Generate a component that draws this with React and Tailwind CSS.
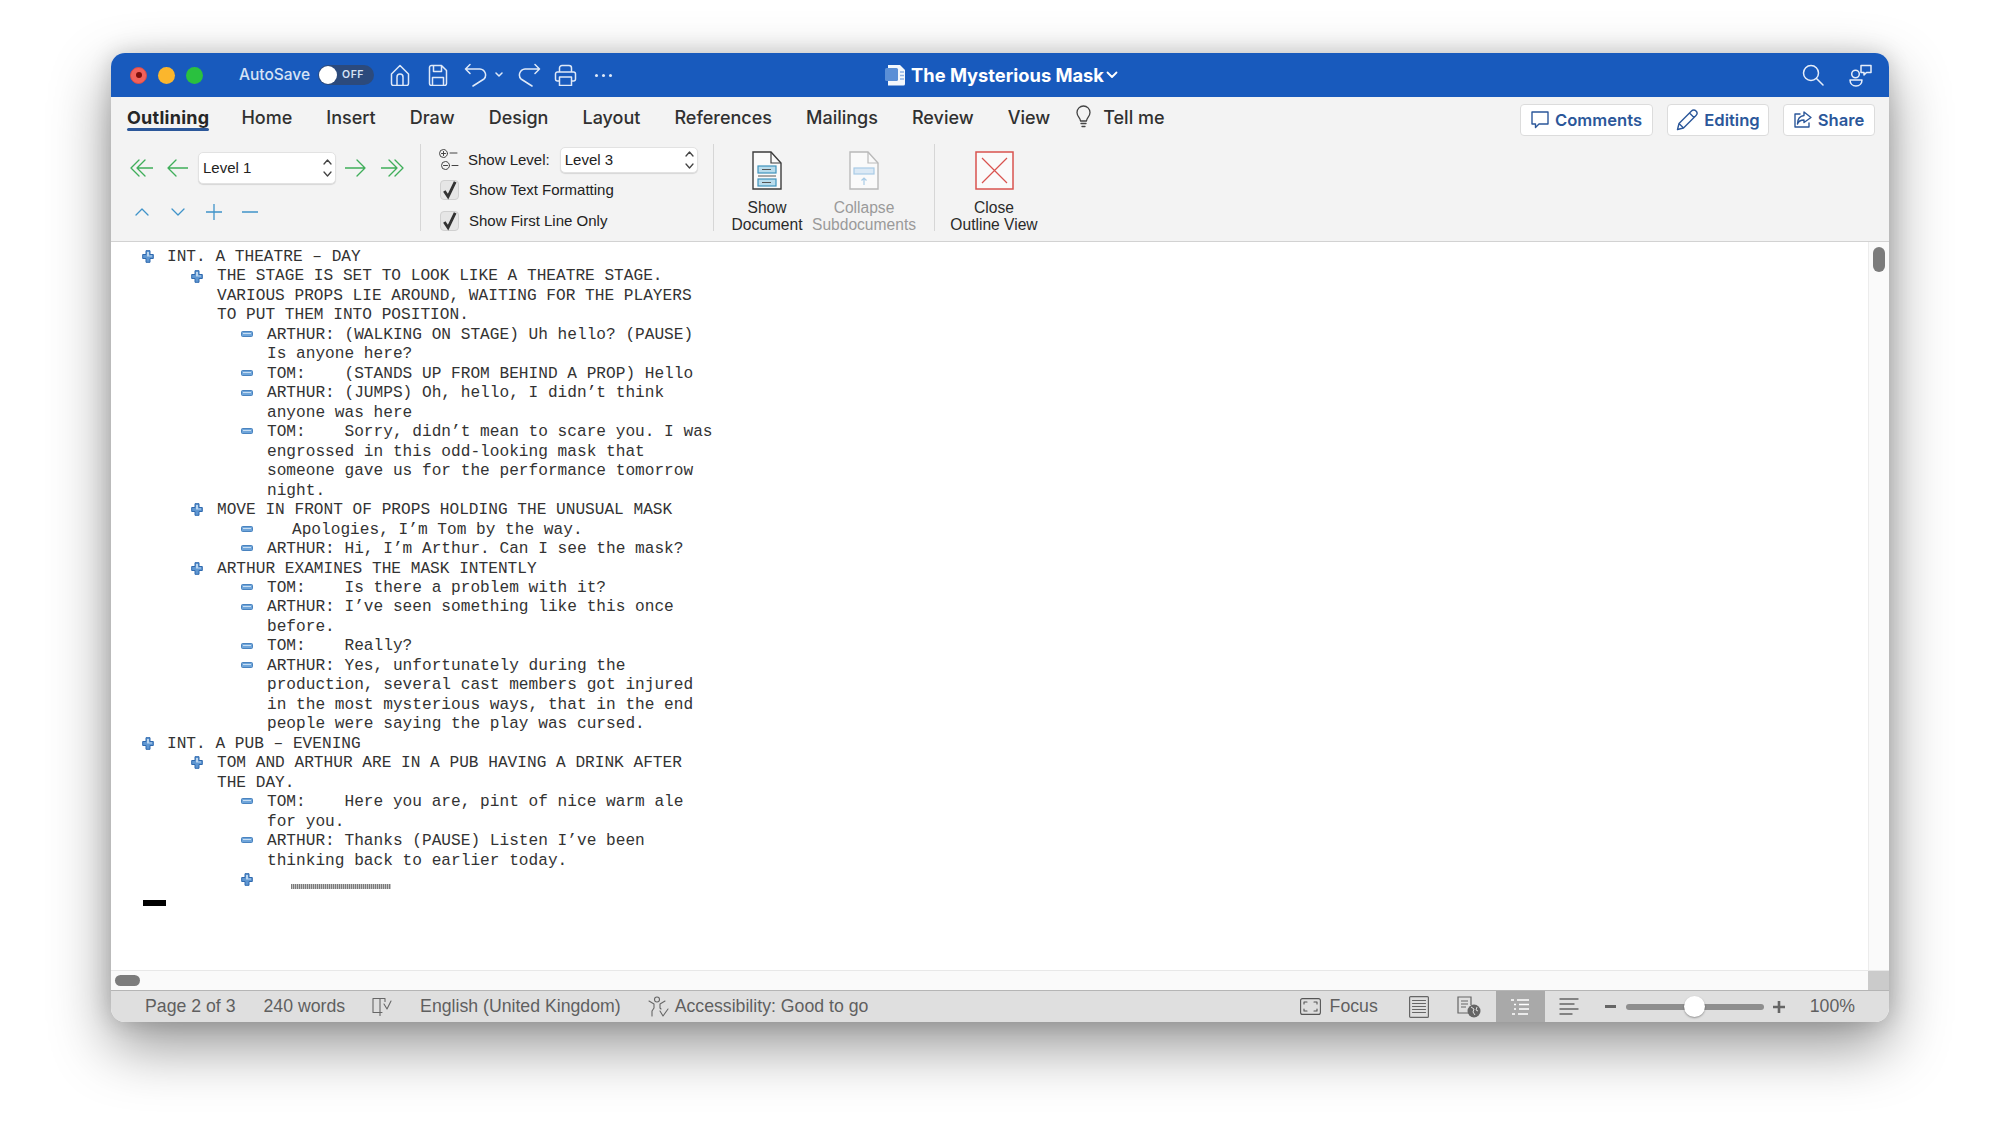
import React from 'react';

const ui = { fontFamily: 'Inter, "Liberation Sans", sans-serif' };
const arial = { fontFamily: '"Liberation Sans", Arial, sans-serif' };

const doc = [
  [1, 'plus', 'INT. A THEATRE – DAY'],
  [2, 'plus', 'THE STAGE IS SET TO LOOK LIKE A THEATRE STAGE.'],
  [2, null, 'VARIOUS PROPS LIE AROUND, WAITING FOR THE PLAYERS'],
  [2, null, 'TO PUT THEM INTO POSITION.'],
  [3, 'minus', 'ARTHUR: (WALKING ON STAGE) Uh hello? (PAUSE)'],
  [3, null, 'Is anyone here?'],
  [3, 'minus', 'TOM:    (STANDS UP FROM BEHIND A PROP) Hello'],
  [3, 'minus', 'ARTHUR: (JUMPS) Oh, hello, I didn’t think'],
  [3, null, 'anyone was here'],
  [3, 'minus', 'TOM:    Sorry, didn’t mean to scare you. I was'],
  [3, null, 'engrossed in this odd-looking mask that'],
  [3, null, 'someone gave us for the performance tomorrow'],
  [3, null, 'night.'],
  [2, 'plus', 'MOVE IN FRONT OF PROPS HOLDING THE UNUSUAL MASK'],
  [3, 'minus', 'Apologies, I’m Tom by the way.', 'pl-[25px]'],
  [3, 'minus', 'ARTHUR: Hi, I’m Arthur. Can I see the mask?'],
  [2, 'plus', 'ARTHUR EXAMINES THE MASK INTENTLY'],
  [3, 'minus', 'TOM:    Is there a problem with it?'],
  [3, 'minus', 'ARTHUR: I’ve seen something like this once'],
  [3, null, 'before.'],
  [3, 'minus', 'TOM:    Really?'],
  [3, 'minus', 'ARTHUR: Yes, unfortunately during the'],
  [3, null, 'production, several cast members got injured'],
  [3, null, 'in the most mysterious ways, that in the end'],
  [3, null, 'people were saying the play was cursed.'],
  [1, 'plus', 'INT. A PUB – EVENING'],
  [2, 'plus', 'TOM AND ARTHUR ARE IN A PUB HAVING A DRINK AFTER'],
  [2, null, 'THE DAY.'],
  [3, 'minus', 'TOM:    Here you are, pint of nice warm ale'],
  [3, null, 'for you.'],
  [3, 'minus', 'ARTHUR: Thanks (PAUSE) Listen I’ve been'],
  [3, null, 'thinking back to earlier today.'],
];

const indent = { 1: 'pl-[31px]', 2: 'pl-[80px]', 3: 'pl-[130px]' };
const textGap = { 1: 'w-[25px]', 2: 'w-[26px]', 3: 'w-[26px]' };

const PlusMark = () => (
  <svg width="12" height="13" viewBox="0 0 12 13" className="mt-[1px]">
    <path d="M4 .7h4v3.8h3.3v4H8v3.8H4V8.5H.7v-4H4z" fill="#5f97d2" stroke="#2f69ae" strokeWidth="1" />
    <path d="M5 2h2v3.6h3v1H5z" fill="#bcd6ef" />
  </svg>
);

const MinusMark = () => (
  <svg width="12" height="6" viewBox="0 0 12 6">
    <rect x=".5" y=".5" width="11" height="5" rx="1" fill="#6fa5da" stroke="#4a83bf" />
    <rect x="2" y="2" width="8" height="1" fill="#c8def3" />
  </svg>
);

const DocRow = ({ level, mark, text, pad }) => (
  <div className={`flex h-[19.48px] items-center ${indent[level]}`}>
    <div className={`${textGap[level]} shrink-0 flex items-center`}>
      {mark === 'plus' && <PlusMark />}
      {mark === 'minus' && <MinusMark />}
    </div>
    <span className={`whitespace-pre pt-[3px] ${pad || ''}`}>{text}</span>
  </div>
);

const Stroke = ({ w, h, vb, color = '#fff', sw = 1.5, children, className = '' }) => (
  <svg width={w} height={h} viewBox={vb || `0 0 ${w} ${h}`} fill="none" stroke={color} strokeWidth={sw} strokeLinecap="round" strokeLinejoin="round" className={`shrink-0 ${className}`}>
    {children}
  </svg>
);

const Stepper = () => (
  <Stroke w={9} h={22} color="#444" sw={1.3}>
    <path d="M1 7l3.500-4L8 7M1 15l3.500 4L8 15" />
  </Stroke>
);

const Check = () => (
  <div className="w-[19px] h-[20px] rounded-[4px] bg-[#e6e6e6] border border-[#d0d0d0] flex items-center justify-center shrink-0">
    <svg width="18" height="20" viewBox="0 0 18 20" fill="none" stroke="#333" strokeWidth="3">
      <path d="M3.500 11l4 6L15 1.500" />
    </svg>
  </div>
);

const PageIcon = ({ dim }) => {
  const edge = dim ? '#b9b9b9' : '#3c3c3c';
  return (
    <svg width="30" height="39" viewBox="0 0 30 39" fill="none">
      <path d="M1 1h18l10 11v26H1z" fill="#fafafa" stroke={edge} strokeWidth="1.4" />
      <path d="M19 1v11h10" stroke={edge} strokeWidth="1.2" />
      {dim ? (
        <>
          <rect x="5" y="17" width="20" height="6" fill="#dbe9f5" stroke="#a8cbe6" strokeWidth="1.2" />
          <path d="M15 34v-7M12.500 29.500L15 27l2.500 2.500" stroke="#a8cbe6" strokeWidth="1.2" />
        </>
      ) : (
        <>
          <rect x="6" y="15" width="18" height="7" fill="#b9dcec" stroke="#3f93bd" strokeWidth="1.2" />
          <rect x="6" y="28" width="18" height="7" fill="#b9dcec" stroke="#3f93bd" strokeWidth="1.2" />
          <path d="M6 25h18" stroke="#555" strokeWidth="1" />
          <path d="M10 18.500h9M10 31.500h9" stroke="#555" strokeWidth="1" />
        </>
      )}
    </svg>
  );
};

const RibbonButton = ({ lines, dim, w, children }) => (
  <div className={`${w} flex flex-col items-center pt-[15px]`}>
    <div className="h-[39px] flex items-center justify-center">{children}</div>
    <div className={`mt-[9px] text-center text-[15.6px] leading-[17px] whitespace-nowrap ${dim ? 'text-[#9a9a9a]' : 'text-[#2a2a2a]'}`} style={arial}>
      {lines.map((l) => <div key={l}>{l}</div>)}
    </div>
  </div>
);

const Select = ({ label, w, h, className }) => (
  <div className={`${w} ${h} ${className} bg-white rounded-[5px] border border-[#e2e2e2] shadow-[0_1px_1px_rgba(0,0,0,0.12)] flex items-center justify-between pl-[4px] pr-[3px] text-[15px] text-[#222]`} style={arial}>
    <span className="pt-[1px]">{label}</span>
    <Stepper />
  </div>
);

const ActionButton = ({ w, icon, children }) => (
  <div className={`${w} h-[32px] bg-white border border-[#dcdcdc] rounded-[4px] flex items-center justify-center gap-[6px] text-[16.6px] font-semibold text-[#2b579a]`}>
    {icon}
    <span className="pt-[1px]">{children}</span>
  </div>
);

const tabs = ['Home', 'Insert', 'Draw', 'Design', 'Layout', 'References', 'Mailings', 'Review', 'View'];

export default function App() {
  return (
    <div className="w-[2000px] h-[1125px] bg-white overflow-hidden pt-[53px]" style={ui}>
      <div className="w-[1778px] h-[969px] mx-auto rounded-[14px] overflow-hidden flex flex-col bg-white shadow-[0_24px_60px_rgba(0,0,0,0.42),0_0_22px_rgba(0,0,0,0.16)]">

        {/* title bar */}
        <div className="h-[44px] bg-[#185abd] flex items-center shrink-0 text-white">
          <div className="flex-1 flex items-center pl-[19px]">
            <div className="w-[17px] h-[17px] rounded-full bg-[#f2615a] border border-[#d94d46] flex items-center justify-center">
              <div className="w-[6px] h-[6px] rounded-full bg-[#7d0f0a]" />
            </div>
            <div className="w-[17px] h-[17px] rounded-full bg-[#fbb62d] ml-[11px]" />
            <div className="w-[17px] h-[17px] rounded-full bg-[#2ac13f] ml-[11px]" />
            <span className="ml-[36px] text-[15.5px] font-medium text-[#d5e2f5]">AutoSave</span>
            <div className="ml-[8px] w-[56px] h-[20px] rounded-full bg-[#2c4a7c] flex items-center pl-[1px]">
              <div className="w-[18px] h-[18px] rounded-full bg-white" />
              <span className="ml-[5px] text-[10.5px] font-semibold tracking-[0.5px] text-[#d5e2f5]">OFF</span>
            </div>
            <Stroke w={20} h={22} className="ml-[16px]" color="#dfe9f8">
              <path d="M1.500 10L10 1.500 18.500 10v9.500a2 2 0 0 1-2 2h-13a2 2 0 0 1-2-2zM7 21.500V13a3 3 0 0 1 6 0v8.500" />
            </Stroke>
            <Stroke w={20} h={22} className="ml-[18px]" color="#dfe9f8">
              <path d="M1.500 3.500a2 2 0 0 1 2-2h10l5 5v13a2 2 0 0 1-2 2h-13a2 2 0 0 1-2-2zM5.500 1.500v6h8v-6M4.500 21.500v-8h11v8" />
            </Stroke>
            <Stroke w={24} h={24} className="ml-[16px]" color="#dfe9f8">
              <path d="M6 1.500L1.500 6 6 10.500M1.500 6H16a6 6 0 0 1 4 10L9 23" />
            </Stroke>
            <Stroke w={8} h={6} className="ml-[7px]" color="#dfe9f8">
              <path d="M1 1l3 3 3-3" />
            </Stroke>
            <Stroke w={23} h={24} className="ml-[15px]" color="#dfe9f8">
              <path d="M17 1.500L21.500 6 17 10.500M21.500 6H7a6 6 0 0 0-4 10l11 7" />
            </Stroke>
            <Stroke w={23} h={22} className="ml-[13px]" color="#dfe9f8">
              <path d="M5.500 8V4a2.500 2.500 0 0 1 2.500-2.500h7A2.500 2.500 0 0 1 17.500 4v4M5.500 17h-2a2 2 0 0 1-2-2v-5a2 2 0 0 1 2-2h16a2 2 0 0 1 2 2v5a2 2 0 0 1-2 2h-2M5.500 13h12v8.500h-12z" />
            </Stroke>
            <div className="ml-[18px] flex gap-[4px]">
              <div className="w-[3px] h-[3px] rounded-full bg-[#dfe9f8]" />
              <div className="w-[3px] h-[3px] rounded-full bg-[#dfe9f8]" />
              <div className="w-[3px] h-[3px] rounded-full bg-[#dfe9f8]" />
            </div>
          </div>
          <div className="flex items-center">
            <svg width="22" height="24" viewBox="0 0 22 24" className="mr-[4px]">
              <path d="M3 2h12l5 5v14a1.500 1.500 0 0 1-1.500 1.500H3z" fill="#f3f7fc" />
              <rect x="0" y="5" width="13" height="13" rx="1.500" fill="#5b8fd6" />
              <path d="M15 9h4M15 12.500h4M15 16h4" stroke="#8fb2e3" strokeWidth="1.500" />
            </svg>
            <span className="text-[18.300px] font-bold pt-[1px]">The Mysterious Mask</span>
            <Stroke w={12} h={8} className="ml-[2px]" sw={1.8}>
              <path d="M1.500 1.500L6 6l4.500-4.500" />
            </Stroke>
          </div>
          <div className="flex-1 flex items-center justify-end pr-[16px]">
            <Stroke w={22} h={22} color="#e6eefa">
              <circle cx="9" cy="9" r="7.500" />
              <path d="M14.500 14.500l6.500 6.500" />
            </Stroke>
            <Stroke w={24} h={23} className="ml-[25px]" color="#e6eefa">
              <circle cx="6.500" cy="10" r="3.800" />
              <path d="M1 16h12c0 3.500-2.500 6-6 6s-6-2.500-6-6z" />
              <path d="M12 1.500h10v7h-4.500L15 11V8.500h-3z" />
            </Stroke>
          </div>
        </div>

        {/* tabs */}
        <div className="h-[39px] bg-[#f3f3f3] flex items-center pl-[16px] pr-[14px] shrink-0 text-[18px] text-[#303030]">
          <div className="relative font-bold text-[#262626] pt-[2px] tracking-[0.25px]">
            Outlining
            <div className="absolute left-0 right-0 top-[26px] h-[3px] rounded-full bg-[#2b579a]" />
          </div>
          <div className="ml-[32px] flex items-center gap-[34px] font-medium pt-[2px]">
            {tabs.map((t) => <span key={t}>{t}</span>)}
          </div>
          <Stroke w={15} h={23} className="ml-[26px]" color="#444" sw={1.3}>
            <path d="M4.500 16c0-3-3.500-4.500-3.500-8.500a6.500 6.500 0 0 1 13 0C14 11.500 10.500 13 10.500 16zM5 18.500h5M6 21.500h3" />
          </Stroke>
          <span className="ml-[12px] font-medium pt-[2px]">Tell me</span>
          <div className="ml-auto flex gap-[14px] pt-[6px]">
            <ActionButton w="w-[133px]" icon={
              <Stroke w={18} h={18} color="#2b579a" sw={1.4}><path d="M1 1h16v12H8l-3.500 3.500V13H1z" /></Stroke>
            }>Comments</ActionButton>
            <ActionButton w="w-[102px]" icon={
              <Stroke w={22} h={22} color="#2b579a" sw={1.4}><path d="M1.500 20.500l1.500-6L15.500 2a2.100 2.100 0 0 1 4.500 4.500L7.500 19zM3 14.500L7.500 19M13.500 4l4.500 4.500" /></Stroke>
            }>Editing</ActionButton>
            <ActionButton w="w-[92px]" icon={
              <Stroke w={18} h={18} color="#2b579a" sw={1.4}><path d="M6 3H1v13h14v-4M10 1l7 5.500-7 5V9c-3.500 0-5.500 1-6.500 4 0-5 2.500-8 6.500-8.500z" /></Stroke>
            }>Share</ActionButton>
          </div>
        </div>

        {/* ribbon */}
        <div className="h-[106px] bg-[#f3f3f3] border-b border-[#d2d2d2] flex items-start shrink-0">
          <div className="w-[309px] pl-[19px] pt-[16px] shrink-0">
            <div className="flex items-center h-[32px]">
              <Stroke w={23} h={18} color="#3fae5a" sw={1.3}>
                <path d="M9 1L1 9l8 8M15 1L7 9l8 8M7 9h16" />
              </Stroke>
              <Stroke w={21} h={18} className="ml-[14px]" color="#3fae5a" sw={1.3}>
                <path d="M9 1L1 9l8 8M1 9h20" />
              </Stroke>
              <Select label="Level 1" w="w-[138px]" h="h-[32px]" className="ml-[10px]" />
              <Stroke w={21} h={18} className="ml-[9px]" color="#3fae5a" sw={1.3}>
                <path d="M12 1l8 8-8 8M20 9H0" />
              </Stroke>
              <Stroke w={23} h={18} className="ml-[15px]" color="#3fae5a" sw={1.3}>
                <path d="M8 1l8 8-8 8M14 1l8 8-8 8M16 9H0" />
              </Stroke>
            </div>
            <div className="flex items-center h-[32px] mt-[12px] ml-[4px] gap-[20px]">
              <Stroke w={16} h={16} color="#3f93c9" sw={1.3}><path d="M2 11l6-6 6 6" /></Stroke>
              <Stroke w={16} h={16} color="#3f93c9" sw={1.3}><path d="M2 5l6 6 6-6" /></Stroke>
              <Stroke w={16} h={16} color="#3f93c9" sw={1.3}><path d="M8 0v16M0 8h16" /></Stroke>
              <Stroke w={16} h={16} color="#3f93c9" sw={1.3}><path d="M0 8h16" /></Stroke>
            </div>
          </div>
          <div className="w-px h-[87px] mt-[8px] bg-[#d6d6d6] shrink-0" />
          <div className="w-[292px] pl-[17px] pt-[11px] shrink-0 text-[15px] text-[#222]" style={arial}>
            <div className="flex items-center h-[26px]">
              <Stroke w={21} h={24} color="#444" sw={1}>
                <circle cx="5.500" cy="5.500" r="4" />
                <circle cx="7.500" cy="17.500" r="4" />
                <path d="M3.500 5.500h4M5.500 3.500v4M5.500 17.500h4M12 5h7M14 17.500h6" />
              </Stroke>
              <span className="ml-[9px] pt-[1px]">Show Level:</span>
              <Select label="Level 3" w="w-[138px]" h="h-[26px]" className="ml-[10px]" />
            </div>
            <div className="flex items-center h-[20px] mt-[7px] ml-[2px]">
              <Check />
              <span className="ml-[10px] pt-[1px]">Show Text Formatting</span>
            </div>
            <div className="flex items-center h-[20px] mt-[11px] ml-[2px]">
              <Check />
              <span className="ml-[10px] pt-[1px]">Show First Line Only</span>
            </div>
          </div>
          <div className="w-px h-[87px] mt-[8px] bg-[#d6d6d6] shrink-0" />
          <RibbonButton lines={['Show', 'Document']} w="w-[96px] ml-[5px]">
            <PageIcon />
          </RibbonButton>
          <RibbonButton lines={['Collapse', 'Subdocuments']} w="w-[96px] ml-[1px]" dim>
            <PageIcon dim />
          </RibbonButton>
          <div className="w-px h-[87px] mt-[8px] ml-[22px] bg-[#d6d6d6] shrink-0" />
          <RibbonButton lines={['Close', 'Outline View']} w="w-[118px]">
            <svg width="39" height="39" viewBox="0 0 39 39" fill="none" stroke="#d9534f">
              <rect x="1" y="1" width="37" height="37" fill="#fafafa" strokeWidth="1.500" />
              <path d="M7 7l25 25M32 7L7 32" strokeWidth="1.200" />
            </svg>
          </RibbonButton>
        </div>

        {/* document */}
        <div className="flex-1 flex min-h-0">
          <div className="flex-1 bg-white pt-[4.500px] text-[16.150px] leading-[19.480px] text-[#333]" style={{ fontFamily: '"Liberation Mono", "Courier New", monospace' }}>
            {doc.map(([level, mark, text, pad], i) => <DocRow key={i} level={level} mark={mark} text={text} pad={pad} />)}
            <div className="flex h-[19.480px] items-center pl-[130px]">
              <div className="w-[50px] shrink-0"><PlusMark /></div>
              <div className="w-[100px] h-[5px] mt-[14px] bg-[repeating-linear-gradient(90deg,#7a7a7a_0_1px,#c4c4c4_1px_2px)]" />
            </div>
            <div className="pl-[32px] pt-[11px]">
              <div className="w-[23px] h-[6px] bg-black" />
            </div>
          </div>
          <div className="w-[21px] bg-[#fafafa] border-l border-[#ececec] pt-[5px] flex justify-center shrink-0">
            <div className="w-[12px] h-[25px] rounded-full bg-[#7c7c7c]" />
          </div>
        </div>

        {/* horizontal scroll */}
        <div className="h-[20px] bg-[#fafafa] border-t border-[#e8e8e8] flex items-center shrink-0">
          <div className="ml-[4px] w-[25px] h-[11px] rounded-full bg-[#7c7c7c]" />
          <div className="ml-auto w-[21px] h-full bg-[#cbcbcb]" />
        </div>

        {/* status bar */}
        <div className="h-[32px] bg-[#dfdfdf] border-t border-[#b5b5b5] flex items-center shrink-0 text-[17.700px] text-[#5f5f5f]" style={arial}>
          <span className="ml-[34px]">Page 2 of 3</span>
          <span className="ml-[28px]">240 words</span>
          <Stroke w={21} h={20} className="ml-[27px]" color="#666" sw={1.100}>
            <path d="M1 1.500h7v14H1zM8 1.500v17M8 15.500h2M8 1.500h5v3M12 7l3 5 4-8" />
          </Stroke>
          <span className="ml-[27px]">English (United Kingdom)</span>
          <Stroke w={22} h={22} className="ml-[27px]" color="#666" sw={1.100}>
            <circle cx="9" cy="3.500" r="2.500" />
            <path d="M1 5l5 3v4l-2 3v5M17 5l-5 3v4l1 1M12 15l3 5 5-7" />
          </Stroke>
          <span className="ml-[5px]">Accessibility: Good to go</span>

          <div className="ml-auto flex items-center h-full">
            <Stroke w={21} h={17} color="#555" sw={1.100}>
              <rect x=".6" y=".6" width="19.800" height="15.800" rx="2" />
              <path d="M4 6V4h3M14 4h3v2M17 11v2h-3M7 13H4v-2" />
            </Stroke>
            <span className="ml-[9px]">Focus</span>
            <Stroke w={20} h={22} className="ml-[31px]" color="#666" sw={1.200}>
              <rect x=".6" y=".6" width="18.800" height="20.800" rx="1" />
              <path d="M3.500 4.500h13M3.500 7.500h13M3.500 10.500h13M3.500 13.500h13M3.500 16.500h13" />
            </Stroke>
            <svg width="24" height="22" viewBox="0 0 24 22" fill="none" stroke="#666" strokeWidth="1.200" className="ml-[28px] shrink-0">
              <path d="M12 17H1V1h13v8M4 5h7M4 8h7M4 11h5" />
              <circle cx="17" cy="15" r="6.500" fill="#666" stroke="none" />
              <path d="M14 11l3 2-1 3 2 3M20 11l-1 3 2 1" stroke="#dfdfdf" strokeWidth="1" />
            </svg>
            <div className="ml-[15px] w-[49px] h-full bg-[#a9a9a9] flex items-center justify-center">
              <svg width="20" height="16" viewBox="0 0 20 16" fill="none" stroke="#fff" strokeWidth="1.400">
                <path d="M1 1h3M7 1h12M4 5.500h2M9 5.500h10M4 10h2M9 10h10M2 15h3M8 15h10" />
              </svg>
            </div>
            <Stroke w={20} h={17} className="ml-[14px]" color="#666" sw={1.400}>
              <path d="M1 1h18M1 6h14M1 11h18M1 16h12" />
            </Stroke>
            <div className="ml-[26px] w-[11px] h-[3px] bg-[#666]" />
            <div className="ml-[10px] w-[138px] h-[6px] rounded-full bg-[#8e8e8e] relative flex items-center">
              <div className="absolute left-[58px] w-[21px] h-[21px] rounded-full bg-white shadow-[0_1px_2px_rgba(0,0,0,0.35)]" />
            </div>
            <svg width="12" height="12" viewBox="0 0 12 12" className="ml-[9px]" fill="#666">
              <path d="M4.700 0h2.600v4.700H12v2.600H7.300V12H4.700V7.300H0V4.700h4.700z" />
            </svg>
            <span className="ml-[25px] mr-[34px]">100%</span>
          </div>
        </div>
      </div>
    </div>
  );
}
